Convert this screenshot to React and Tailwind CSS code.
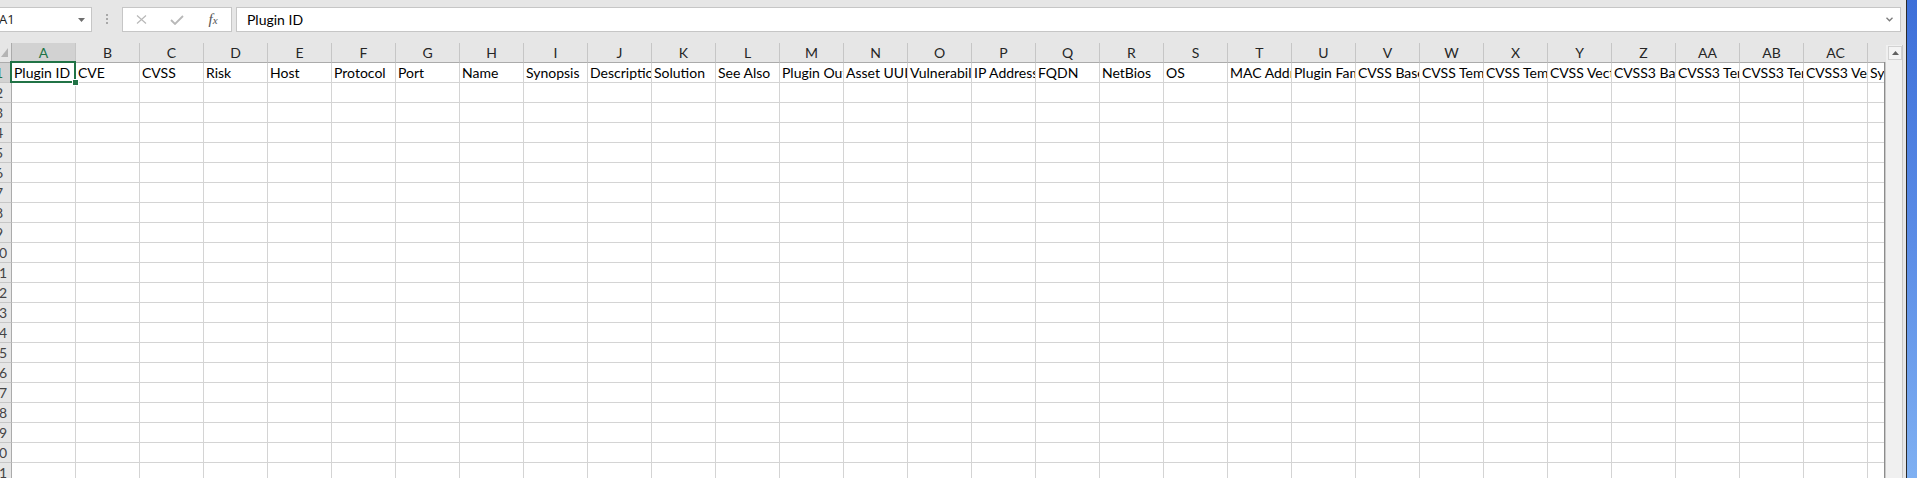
import React from 'react';

const COLS = [
  ['A', 'Plugin ID'], ['B', 'CVE'], ['C', 'CVSS'], ['D', 'Risk'], ['E', 'Host'],
  ['F', 'Protocol'], ['G', 'Port'], ['H', 'Name'], ['I', 'Synopsis'], ['J', 'Description'],
  ['K', 'Solution'], ['L', 'See Also'], ['M', 'Plugin Output'], ['N', 'Asset UUID'],
  ['O', 'Vulnerability State'], ['P', 'IP Address'], ['Q', 'FQDN'], ['R', 'NetBios'],
  ['S', 'OS'], ['T', 'MAC Address'], ['U', 'Plugin Family'], ['V', 'CVSS Base Score'],
  ['W', 'CVSS Temporal Score'], ['X', 'CVSS Temporal Vector'], ['Y', 'CVSS Vector'],
  ['Z', 'CVSS3 Base Score'], ['AA', 'CVSS3 Temporal Score'], ['AB', 'CVSS3 Temporal Vector'],
  ['AC', 'CVSS3 Vector'], ['AD', 'System Type'],
];

const ROWS = Array.from({ length: 21 }, (_, i) => i + 1);

const FormulaBar = () => (
  <div className="flex h-[43px] shrink-0 items-start pt-[7px] pr-[5px]">
    {/* name box */}
    <div className="flex h-[25px] w-[92px] shrink-0 items-center justify-between border border-l-0 border-[#c6c6c6] bg-white pr-[6px]">
      <span className="[font-family:'Open_Sans',sans-serif] text-[13px] leading-none text-[#222] -ml-[1px]">A1</span>
      <svg width="7" height="4" viewBox="0 0 7 4">
        <polygon points="0,0 7,0 3.5,4" fill="#6e6e6e" />
      </svg>
    </div>

    {/* grip dots */}
    <div className="ml-[14px] mt-[7px] flex w-[2px] flex-col gap-[2px]">
      <span className="h-[2px] w-[2px] bg-[#a8a8a8]" />
      <span className="h-[2px] w-[2px] bg-[#a8a8a8]" />
      <span className="h-[2px] w-[2px] bg-[#a8a8a8]" />
    </div>

    {/* cancel / enter / fx */}
    <div className="ml-[14px] flex h-[25px] w-[110px] shrink-0 items-center border border-[#c6c6c6] bg-white">
      <div className="flex w-[36px] justify-center">
        <svg width="11" height="9" viewBox="0 0 11 9">
          <path d="M1 0.5 L10 8.5 M10 0.5 L1 8.5" stroke="#b8b8b8" strokeWidth="1.2" fill="none" />
        </svg>
      </div>
      <div className="flex w-[36px] justify-center">
        <svg width="14" height="10" viewBox="0 0 14 10">
          <path d="M1 5 L5 9 L13 1" stroke="#b8b8b8" strokeWidth="1.8" fill="none" />
        </svg>
      </div>
      <div className="flex w-[36px] justify-center">
        <span className="[font-family:'Liberation_Serif',serif] italic text-[#555] text-[15px] leading-none">
          f<span className="text-[11px]">x</span>
        </span>
      </div>
    </div>

    {/* formula input */}
    <div className="ml-[4px] flex h-[25px] flex-1 items-center justify-between border border-[#c6c6c6] bg-white pl-[10px] pr-[7px]">
      <span className="[font-family:Lato,sans-serif] text-[14px] leading-none text-black">Plugin ID</span>
      <svg width="7" height="5" viewBox="0 0 7 5">
        <path d="M0.5 0.8 L3.5 3.8 L6.5 0.8" stroke="#7a7a7a" strokeWidth="1.3" fill="none" />
      </svg>
    </div>
  </div>
);

const HeaderRow = () => (
  <div className="flex h-[20px] shrink-0">
    <div className="flex h-[20px] w-[12px] shrink-0 items-end justify-end border-b border-r border-[#ababab] bg-[#e6e6e6] pb-[5px] pr-[3px]">
      <svg width="7" height="9" viewBox="0 0 7 9">
        <polygon points="7,0 7,9 0,9" fill="#b4b4b4" />
      </svg>
    </div>
    {COLS.map(([letter], i) => (
      <div
        key={letter}
        className={
          i === 0
            ? 'h-[20px] w-[64px] shrink-0 border-r border-b border-r-[#c6c6c6] border-b-[#217346] bg-[#d2d2d2] text-center text-[14px] leading-[19px] text-[#217346]'
            : 'h-[20px] w-[64px] shrink-0 border-r border-b border-r-[#c6c6c6] border-b-[#ababab] bg-[#e6e6e6] text-center text-[14px] leading-[19px] text-[#262626]'
        }
      >
        {letter}
      </div>
    ))}
  </div>
);

const Row = ({ n }) => (
  <div className="flex h-[20px] shrink-0">
    <div
      className={
        n === 1
          ? 'h-[20px] w-[12px] shrink-0 overflow-hidden border-b border-r border-b-[#c6c6c6] border-r-[#217346] bg-[#d2d2d2] text-[#217346]'
          : 'h-[20px] w-[12px] shrink-0 overflow-hidden border-b border-r border-b-[#c6c6c6] border-r-[#ababab] bg-[#e6e6e6] text-[#444]'
      }
    >
      <div className="-ml-[14px] w-[26px] text-center text-[14px] leading-[19px]">{n}</div>
    </div>
    {COLS.map(([letter, title], i) => (
      <div
        key={letter}
        className="relative h-[20px] w-[64px] shrink-0 border-b border-r border-[#d4d4d4] bg-white"
      >
        {n === 1 && (
          <div className="overflow-hidden whitespace-nowrap pl-[2px] text-[14px] leading-[19px] text-black">
            {title}
          </div>
        )}
        {n === 1 && i === 0 && (
          <>
            <div className="absolute -left-[2px] -top-[2px] z-10 h-[22px] w-[66px] border-2 border-[#217346]" />
            <div className="absolute left-[60px] top-[16px] z-20 h-[7px] w-[7px] border border-white bg-[#217346]" />
          </>
        )}
      </div>
    ))}
  </div>
);

const ScrollColumn = () => (
  <div className="flex w-[22px] shrink-0">
    <div className="flex w-[2px] flex-col">
      <div className="h-[19px] shrink-0" />
      <div className="flex-1 border-l border-r border-l-[#8c8c8c] border-r-[#c8c8c8]" />
    </div>
    <div className="mt-[2px] flex w-[17px] flex-col border-r border-[#c8c8c8] bg-[#f0f0f0]">
      <div className="ml-[2px] mt-[1px] flex h-[14px] w-[14px] items-center justify-center border border-[#d2d2d2] bg-[#f4f4f4]">
        <svg width="7" height="4" viewBox="0 0 7 4">
          <polygon points="0,4 7,4 3.5,0" fill="#606060" />
        </svg>
      </div>
    </div>
    <div className="w-[3px]" />
  </div>
);

export default function App() {
  return (
    <div className="flex h-[478px] w-[1917px] overflow-hidden bg-[#e6e6e6] [font-family:Lato,sans-serif]">
      <div className="flex w-[1907px] shrink-0 flex-col border-r border-[#2a2a2a]">
        <FormulaBar />
        <div className="flex flex-1 overflow-hidden">
          <div className="flex w-[1884px] shrink-0 flex-col overflow-hidden">
            <HeaderRow />
            {ROWS.map((n) => (
              <Row key={n} n={n} />
            ))}
          </div>
          <ScrollColumn />
        </div>
      </div>
      <div className="w-[10px] shrink-0 bg-linear-to-b from-[#3d6fd9] via-[#5b8ce6] to-[#7fb0f2]" />
    </div>
  );
}
